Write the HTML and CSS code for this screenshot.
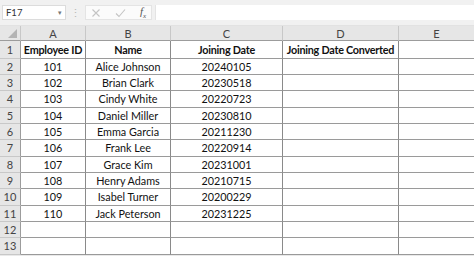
FILE: index.html
```html
<!DOCTYPE html>
<html>
<head>
<meta charset="utf-8">
<link rel="stylesheet" href="styles.css">
</head>
<body>
<div class="app">
  <div class="fbar">
    <div class="namebox"><span class="ref">F17</span><span class="caret">&#9662;</span></div>
    <div class="grip">&#8942;</div>
    <div class="fxbox">
      <svg class="ico" width="10" height="10" viewBox="0 0 10 10"><path d="M1.5 1.5 L8.5 8.5 M8.5 1.5 L1.5 8.5" stroke="#c4c4c4" stroke-width="1.1" fill="none"/></svg>
      <svg class="ico" width="11" height="10" viewBox="0 0 11 10"><path d="M1 5.5 L4 8.5 L10 1.5" stroke="#c4c4c4" stroke-width="1.1" fill="none"/></svg>
      <span class="fx">f<sub>x</sub></span>
    </div>
    <div class="finput"></div>
  </div>
  <div class="sheet">
    <div class="ch corner"><span class="tri"></span></div>
    <div class="ch">A</div><div class="ch">B</div><div class="ch">C</div><div class="ch">D</div><div class="ch last">E</div>

    <div class="rh r1">1</div><div class="c b r1">Employee ID</div><div class="c b r1">Name</div><div class="c b r1">Joining Date</div><div class="c b r1">Joining Date Converted</div><div class="c e r1"></div>

    <div class="rh">2</div><div class="c">101</div><div class="c">Alice Johnson</div><div class="c">20240105</div><div class="c"></div><div class="c e"></div>
    <div class="rh">3</div><div class="c">102</div><div class="c">Brian Clark</div><div class="c">20230518</div><div class="c"></div><div class="c e"></div>
    <div class="rh">4</div><div class="c">103</div><div class="c">Cindy White</div><div class="c">20220723</div><div class="c"></div><div class="c e"></div>
    <div class="rh">5</div><div class="c">104</div><div class="c">Daniel Miller</div><div class="c">20230810</div><div class="c"></div><div class="c e"></div>
    <div class="rh">6</div><div class="c">105</div><div class="c">Emma Garcia</div><div class="c">20211230</div><div class="c"></div><div class="c e"></div>
    <div class="rh">7</div><div class="c">106</div><div class="c">Frank Lee</div><div class="c">20220914</div><div class="c"></div><div class="c e"></div>
    <div class="rh">8</div><div class="c">107</div><div class="c">Grace Kim</div><div class="c">20231001</div><div class="c"></div><div class="c e"></div>
    <div class="rh">9</div><div class="c">108</div><div class="c">Henry Adams</div><div class="c">20210715</div><div class="c"></div><div class="c e"></div>
    <div class="rh">10</div><div class="c">109</div><div class="c">Isabel Turner</div><div class="c">20200229</div><div class="c"></div><div class="c e"></div>
    <div class="rh">11</div><div class="c">110</div><div class="c">Jack Peterson</div><div class="c">20231225</div><div class="c"></div><div class="c e"></div>
    <div class="rh">12</div><div class="c"></div><div class="c"></div><div class="c"></div><div class="c"></div><div class="c e"></div>
    <div class="rh">13</div><div class="c"></div><div class="c"></div><div class="c"></div><div class="c"></div><div class="c e"></div>
  </div>
</div>
</body>
</html>
```
FILE: styles.css
```css
* { box-sizing: border-box; }
html, body { margin: 0; padding: 0; }
body {
  width: 474px;
  height: 256px;
  overflow: hidden;
  background: #e9e9e9;
  font-family: Lato, "Open Sans", sans-serif;
}
.app { display: flex; flex-direction: column; }
.fbar {
  height: 26px;
  background: #f1f1f1;
  display: flex;
  align-items: center;
  padding: 0 0 0 2px;
  border-bottom: 1px solid #e2e2e2;
}
.namebox {
  width: 64px;
  height: 15px;
  background: #fff;
  border: 1px solid #dcdcdc;
  display: flex;
  align-items: center;
  justify-content: space-between;
  padding: 0 3px 0 3px;
  font-size: 9.5px;
  color: #333;
}
.caret { font-size: 7px; color: #777; }
.grip { width: 19px; text-align: center; color: #b8b8b8; font-size: 11px; }
.fxbox {
  width: 67px;
  height: 15px;
  background: #fbfbfb;
  border: 1px solid #e4e4e4;
  display: flex;
  align-items: center;
  padding: 0 0 0 5px;
  gap: 14px;
}
.ico { display: block; }
.fx {
  font-family: "Liberation Serif", serif;
  font-style: italic;
  font-size: 11px;
  color: #555;
}
.fx sub { font-size: 7px; }
.finput {
  flex: 1;
  height: 15px;
  margin-left: 3px;
  background: #fff;
  border-left: 1px solid #e4e4e4;
}
.sheet {
  display: grid;
  grid-template-columns: 21px 65px 85px 112px 116px 75px;
  grid-template-rows: 15px 17.6px repeat(12, 16.33px);
  background: #fff;
  font-size: 10.8px;
  color: #111;
}
.ch {
  background: #e6e6e6;
  border-right: 1px solid #c8c8c8;
  border-bottom: 1px solid #9c9c9c;
  color: #444;
  font-size: 11px;
  display: flex;
  align-items: center;
  justify-content: center;
}
.ch.last { border-right: none; }
.corner { position: relative; }
.tri {
  position: absolute;
  right: 3px;
  bottom: 2px;
  width: 0;
  height: 0;
  border-left: 9px solid transparent;
  border-bottom: 9px solid #b4b4b4;
}
.rh {
  background: #e6e6e6;
  border-right: 1px solid #9c9c9c;
  border-bottom: 1px solid #c8c8c8;
  color: #444;
  font-size: 11px;
  display: flex;
  align-items: center;
  justify-content: center;
}
.c {
  border-right: 1px solid #8a8a8a;
  border-bottom: 1px solid #9a9a9a;
  display: flex;
  align-items: center;
  justify-content: center;
  white-space: nowrap;
  overflow: hidden;
}
.c.e { border-right: none; }
.b { font-weight: bold; font-size: 10.8px; letter-spacing: -0.25px; }
```
